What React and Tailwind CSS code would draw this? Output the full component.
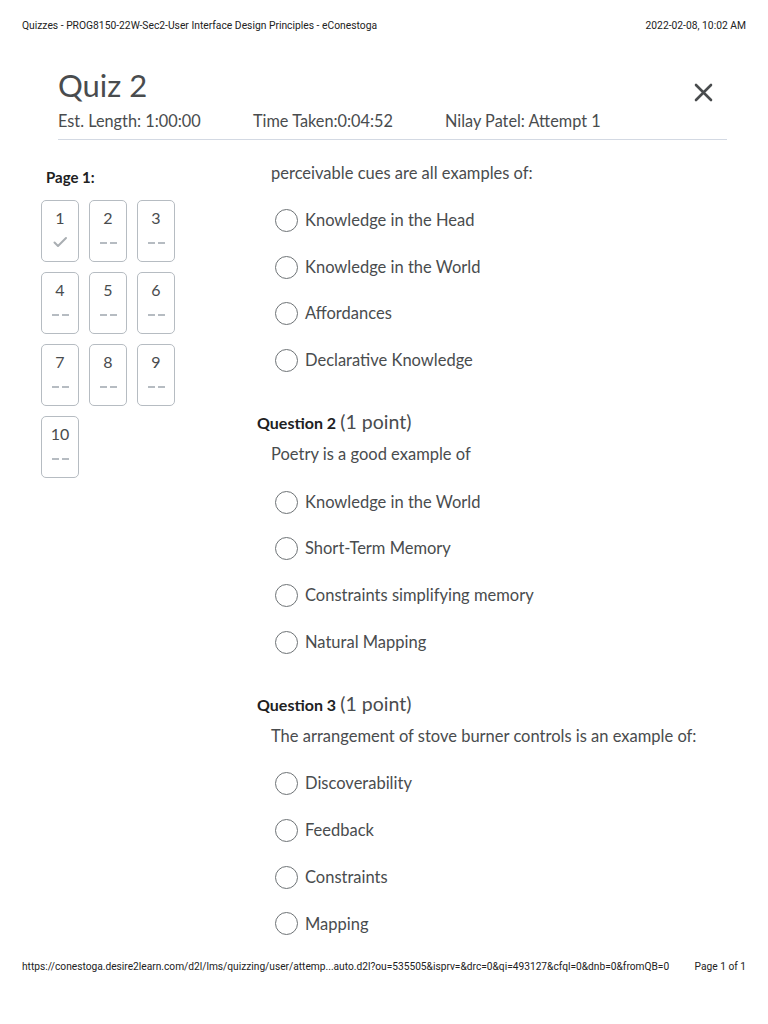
import React from "react";

const Radio = ({ label }) => (
  <div className="flex items-center h-[46.7px] pl-[18px]">
    <span className="w-[23px] h-[23px] rounded-full border border-[#6e7376] bg-white shrink-0" />
    <span className="ml-[7px] text-[16.5px] text-[#494c4e]">{label}</span>
  </div>
);

const Box = ({ n, done }) => (
  <div className="w-[38px] h-[62px] rounded-[5px] border border-[#b6bcc2] flex flex-col items-center pt-[7px]">
    <span className="text-[16px] leading-[20px] text-[#494c4e]">{n}</span>
    {done ? (
      <svg width="15" height="12" viewBox="0 0 15 12" className="mt-[8px]">
        <path d="M1.5 6.5 L5 10 L13 2" fill="none" stroke="#a9aeb2" strokeWidth="2" strokeLinecap="round" strokeLinejoin="round" />
      </svg>
    ) : (
      <span className="mt-[14px] flex gap-[3px]">
        <span className="w-[7px] h-[2px] bg-[#b6bcc2]" />
        <span className="w-[7px] h-[2px] bg-[#b6bcc2]" />
      </span>
    )}
  </div>
);

const Question = ({ num, text, options, first }) => (
  <div>
    {!first && (
      <div className="pt-[8px] text-[#202122] leading-[24px]">
        <span className="text-[16px] font-bold">Question {num}</span>{" "}
        <span className="text-[19.5px] text-[#494c4e]">(1 point)</span>
      </div>
    )}
    <div className={`pl-[14px] text-[16.5px] text-[#494c4e] leading-[24px] ${first ? "" : "mt-[7px]"}`}>{text}</div>
    <div className={first ? "mt-[12px]" : "mt-[13px]"}>
      {options.map((o) => (
        <Radio key={o} label={o} />
      ))}
    </div>
  </div>
);

export default function App() {
  return (
    <div className="w-[768px] h-[1024px] bg-white relative" style={{ fontFamily: "Lato, 'Open Sans', sans-serif" }}>
      <div className="flex justify-between px-[22px] pt-[20px] text-[10.3px] text-[#222] leading-[12px]" style={{ fontFamily: "Roboto, 'Liberation Sans', sans-serif" }}>
        <span>Quizzes - PROG8150-22W-Sec2-User Interface Design Principles - eConestoga</span>
        <span>2022-02-08, 10:02 AM</span>
      </div>

      <div className="mx-[58px] mt-[35px] w-[669px]">
        <div className="flex justify-between items-end">
          <h1 className="text-[31px] leading-[36px] text-[#494c4e] font-normal">Quiz 2</h1>
          <svg width="19" height="19" viewBox="0 0 19 19" className="mr-[14px] mb-[1px]">
            <path d="M2 2 L17 17 M17 2 L2 17" stroke="#494c4e" strokeWidth="2.6" strokeLinecap="round" />
          </svg>
        </div>
        <div className="flex text-[16.3px] text-[#494c4e] mt-[8px] leading-[20px]">
          <span className="w-[195px]">Est. Length: 1:00:00</span>
          <span className="w-[192px]">Time Taken:0:04:52</span>
          <span>Nilay Patel: Attempt 1</span>
        </div>
        <div className="h-px bg-[#d3d9e3] mt-[8px]" />
      </div>

      <div className="flex mt-[21px]">
        <div className="w-[257px] pl-[41px]">
          <div className="pl-[5px] text-[15px] font-bold text-[#202122] leading-[20px] mt-[6px]">Page 1:</div>
          <div className="grid grid-cols-[38px_38px_38px] gap-x-[10px] gap-y-[10px] mt-[13px]">
            <Box n="1" done />
            <Box n="2" />
            <Box n="3" />
            <Box n="4" />
            <Box n="5" />
            <Box n="6" />
            <Box n="7" />
            <Box n="8" />
            <Box n="9" />
            <Box n="10" />
          </div>
        </div>
        <div className="flex-1">
          <Question
            first
            text="perceivable cues are all examples of:"
            options={["Knowledge in the Head", "Knowledge in the World", "Affordances", "Declarative Knowledge"]}
          />
          <div className="mt-[18px]">
            <Question
              num="2"
              text="Poetry is a good example of"
              options={["Knowledge in the World", "Short-Term Memory", "Constraints simplifying memory", "Natural Mapping"]}
            />
          </div>
          <div className="mt-[18px]">
            <Question
              num="3"
              text="The arrangement of stove burner controls is an example of:"
              options={["Discoverability", "Feedback", "Constraints", "Mapping"]}
            />
          </div>
        </div>
      </div>

      <div className="absolute left-0 right-0 top-[961px] flex justify-between px-[22px] text-[10.2px] text-[#222] leading-[12px]" style={{ fontFamily: "Roboto, 'Liberation Sans', sans-serif" }}>
        <span>https://conestoga.desire2learn.com/d2l/lms/quizzing/user/attemp...auto.d2l?ou=535505&isprv=&drc=0&qi=493127&cfql=0&dnb=0&fromQB=0</span>
        <span>Page 1 of 1</span>
      </div>
    </div>
  );
}
